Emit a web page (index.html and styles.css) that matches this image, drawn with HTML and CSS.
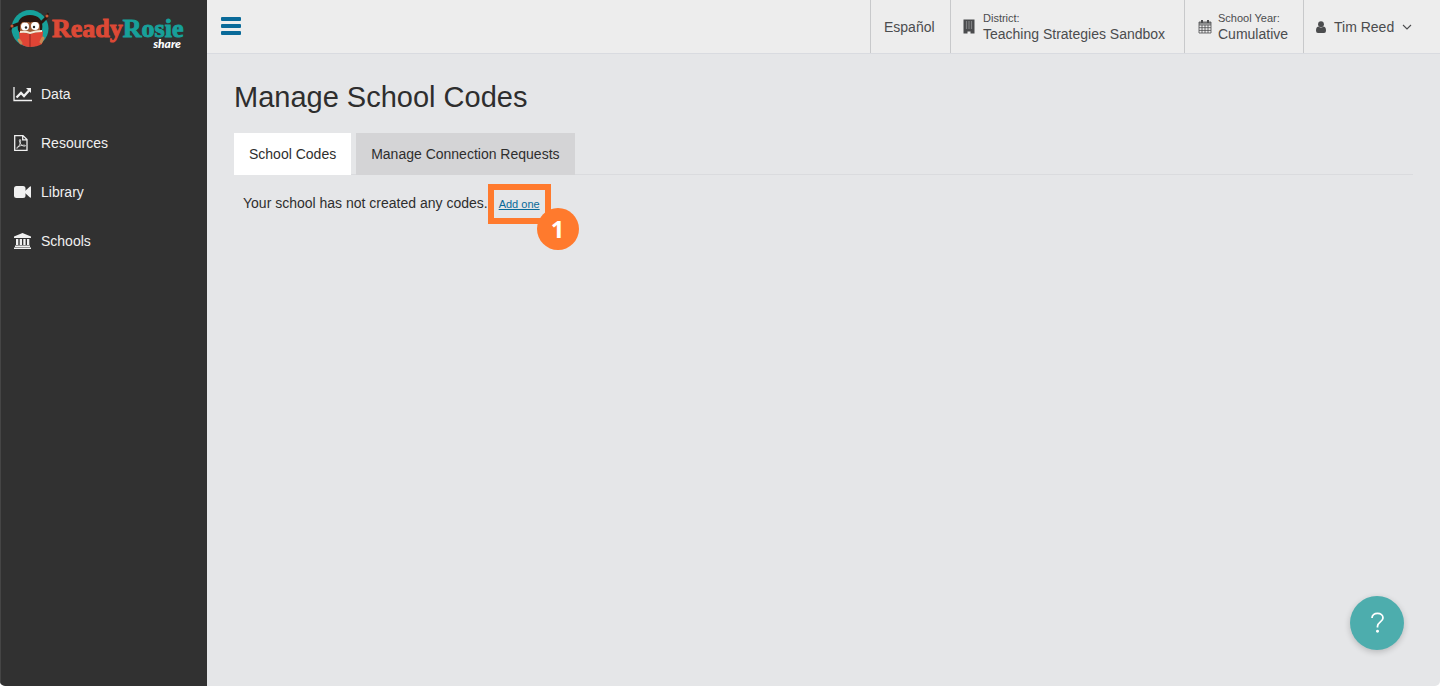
FILE: index.html
```html
<!DOCTYPE html>
<html lang="en">
<head>
    <meta charset="UTF-8">
    <meta name="viewport" content="width=device-width, initial-scale=1.0">
    <title>Manage School Codes</title>
    <link rel="stylesheet" href="styles.css">
</head>
<body>

<div class="app">
    <aside class="sidebar">
        <a class="logo" href="#" aria-label="ReadyRosie share">
            <svg class="logo-mark" viewBox="0 0 42 40" aria-hidden="true">
                <circle cx="22" cy="19.500" r="18.500" fill="#17a09a"/>
                <path d="M10 15 5 17M34 13l5-5" stroke="#2b1711" stroke-width="3" stroke-linecap="round"/>
                <path d="M4 18 2 21M39 8l1-4" stroke="#2b1711" stroke-width="2"/>
                <circle cx="4" cy="17" r="1.500" fill="#c85a35"/>
                <circle cx="39" cy="7" r="1.500" fill="#c85a35"/>
                <path d="M10 21C8 11 14 6 22 6s14 5 12 15l-3 5H13z" fill="#2b1711"/>
                <path d="M12 16l2-3h16l2 3v9H12z" fill="#9c5b36"/>
                <path d="M13 14l3-3 1 3 3-3 2 3 3-3 2 3 3-3 2 3v-4H13z" fill="#2b1711"/>
                <circle cx="17" cy="17.500" r="4" fill="#fff"/>
                <circle cx="27" cy="17" r="4" fill="#fff"/>
                <circle cx="18" cy="18.500" r="1.200" fill="#222"/>
                <circle cx="26" cy="18" r="1.200" fill="#222"/>
                <path d="M11 23l11 2 13-3-1 13q-5 3-12 3-6 0-10-4z" fill="#df4435"/>
                <path d="M22 25v13" stroke="#b8342b" stroke-width="2"/>
                <path d="M12 22q6-1 10 1 5-2 12-2v2q-7 0-12 2-5-2-10-1z" fill="#f5e8d8"/>
                <path d="M11 31l2 3M35 29l-2 4" stroke="#c98552" stroke-width="3" stroke-linecap="round"/>
            </svg>
            <span class="logo-text">
                <span class="logo-name"><span class="logo-ready">Ready</span><span class="logo-rosie">Rosie</span></span>
                <span class="logo-share">share</span>
            </span>
        </a>
        <nav class="menu">
            <a href="#">
                <svg viewBox="0 0 20 18" aria-hidden="true">
                    <path d="M1 2v13.500h18" fill="none" stroke="currentColor" stroke-width="1.300"/>
                    <path d="M3.500 12.500 8 8l3 3 5-5.500" fill="none" stroke="currentColor" stroke-width="2.300"/>
                    <path d="M13 3h5v5z" fill="currentColor"/>
                </svg>
                Data
            </a>
            <a href="#">
                <svg viewBox="0 0 20 18" aria-hidden="true">
                    <path d="M1.700 1.600h8.300l4 4v10.800H1.700zM9.700 1.600v4.300H14" fill="none" stroke="currentColor" stroke-width="1.300"/>
                    <path d="M7 5.500c-1.500 0-.2 4 1.500 5.500 1 1 4 1.800 4 .7 0-1.200-5.500-.3-8 1.300-1.500 1.200-.8 2 .3.700C6 12.300 8.200 8 7.600 6c-.1-.3-.3-.5-.6-.5z" fill="none" stroke="currentColor" stroke-width=".8"/>
                </svg>
                Resources
            </a>
            <a href="#">
                <svg viewBox="0 0 20 18" aria-hidden="true">
                    <rect x="1" y="3" width="11.500" height="12" rx="2.500" fill="currentColor"/>
                    <path d="M12 8l5-4.500q1-.7 1 .5v10q0 1.200-1 .5L12 10z" fill="currentColor"/>
                </svg>
                Library
            </a>
            <a href="#">
                <svg viewBox="0 0 20 18" aria-hidden="true">
                    <path d="M9.500 1 18 4.500V6H1V4.500zM3 7h2.300v6H3zM6.700 7H9v6H6.700zM10.300 7h2.300v6h-2.300zM14 7h2.300v6H14zM2 13.500h15V15H2zM1 15.500h17V17H1z" fill="currentColor"/>
                </svg>
                Schools
            </a>
        </nav>
    </aside>

    <div class="page">
        <header class="topbar">
            <button class="menu-toggle" type="button" aria-label="Toggle menu">
                <span></span><span></span><span></span>
            </button>
            <div class="topbar-items">
                <a class="topbar-item language" href="#">Español</a>
                <a class="topbar-item district" href="#">
                    <svg class="icon-building" viewBox="0 0 12 15" aria-hidden="true">
                        <path d="M.5.5h11v14h-4v-2h-3v2h-4z" fill="currentColor"/>
                        <path d="M3.500 2.500v8M6 2.500v8M8.500 2.500v8" stroke="#ededed" stroke-width="1.200" stroke-dasharray="1 1" opacity=".65"/>
                    </svg>
                    <span class="stacked"><small>District:</small>Teaching Strategies Sandbox</span>
                </a>
                <a class="topbar-item year" href="#">
                    <svg class="icon-calendar" viewBox="0 0 14 15" aria-hidden="true">
                        <path d="M1 3h12v11H1zM1 6h12M1 8.700h12M1 11.400h12M4 6v8M7 6v8M10 6v8" fill="none" stroke="currentColor" stroke-width=".8"/>
                        <path d="M1 3h12v2.500H1z" fill="currentColor" opacity=".6"/>
                        <path d="M4 1v3M10 1v3" stroke="currentColor" stroke-width="2"/>
                    </svg>
                    <span class="stacked"><small>School Year:</small>Cumulative</span>
                </a>
                <button class="topbar-item account" type="button">
                    <svg class="icon-user" viewBox="0 0 10 12" aria-hidden="true">
                        <circle cx="5" cy="3.200" r="2.900" fill="currentColor"/>
                        <path d="M2.300 5.500q2.700 2 5.400 0Q10 6 10 9.700 10 12 8 12H2Q0 12 0 9.700 0 6 2.300 5.500z" fill="currentColor"/>
                    </svg>
                    <span>Tim Reed</span>
                    <svg class="icon-chevron" viewBox="0 0 10 6" aria-hidden="true">
                        <path d="M1 1l4 4 4-4" fill="none" stroke="currentColor" stroke-width="1.100"/>
                    </svg>
                </button>
            </div>
        </header>

        <main class="content">
            <h1>Manage School Codes</h1>
            <div class="tabs" role="tablist">
                <button class="tab active" type="button" role="tab" aria-selected="true">School Codes</button>
                <button class="tab" type="button" role="tab" aria-selected="false">Manage Connection Requests</button>
            </div>
            <p class="empty">
                <span>Your school has not created any codes.</span>
                <span class="highlight"><a href="#">Add one</a><span class="step">1</span></span>
            </p>
        </main>
    </div>

    <button class="help" type="button" aria-label="Help">
        <svg viewBox="0 0 16 24" aria-hidden="true">
            <path d="M2 6.500C2 3.500 4.500 1.500 8 1.500s6 2 6 5c0 4-6 4.500-6 9V17" fill="none" stroke="currentColor" stroke-width="1.900"/>
            <circle cx="8" cy="21" r="1.600" fill="currentColor"/>
        </svg>
    </button>
</div>

</body>
</html>
```
FILE: styles.css
```css
/* Basic Reset */
* {
    margin: 0;
    padding: 0;
    box-sizing: border-box;
}

html {
    background-color: #fff;
}

body {
    font-family: "Liberation Sans", Arial, sans-serif;
    font-size: 14px;
    line-height: 18px;
    color: #2e2e2e;
}

a {
    color: inherit;
    text-decoration: none;
}

button {
    font: inherit;
    color: inherit;
    border: none;
    background: none;
    cursor: pointer;
}

.app {
    display: flex;
    min-height: 100vh;
    overflow: hidden;
    background-color: #e5e6e8;
    border-radius: 0 0 5px 5px;
}

/* Sidebar */
.sidebar {
    flex: 0 0 207px;
    background-color: #313131;
    border-left: 1px solid #454545;
    color: #f0f0f0;
}

.logo {
    display: flex;
    gap: 2px;
    padding: 9px 0 0 7px;
}

.logo-mark {
    width: 42px;
    height: 40px;
}

.logo-text {
    display: flex;
    flex-direction: column;
    width: 129px;
    padding-top: 9px;
    font-weight: bold;
}

.logo-name {
    font-family: "Liberation Serif", "Times New Roman", serif;
    font-size: 26px;
    line-height: 22px;
    -webkit-text-stroke: 1px currentColor;
}

.logo-ready {
    color: #dc4936;
}

.logo-rosie {
    color: #17a09a;
}

.logo-share {
    align-self: flex-end;
    font-family: Lato, sans-serif;
    font-size: 12px;
    font-weight: 900;
    line-height: 8px;
    font-style: italic;
    color: #fff;
}

.menu {
    padding-top: 20px;
}

.menu a {
    display: flex;
    align-items: center;
    gap: 8px;
    height: 49px;
    padding-left: 12px;
}

.menu svg {
    width: 20px;
    height: 18px;
}

/* Top bar */
.page {
    flex: 1;
    min-width: 0;
}

.topbar {
    display: flex;
    justify-content: space-between;
    height: 54px;
    background-color: #ededed;
    border-bottom: 1px solid #d9dbe0;
    color: #4b4c4e;
}

.menu-toggle {
    display: flex;
    flex-direction: column;
    gap: 3px;
    align-self: flex-start;
    padding: 17px 14px;
}

.menu-toggle span {
    width: 20px;
    height: 4px;
    border-radius: 1px;
    background-color: #096a99;
}

.topbar-items {
    display: flex;
}

.topbar-item {
    display: flex;
    align-items: center;
    padding: 0 13px;
    border-left: 1px solid #c8c9cb;
    white-space: nowrap;
}

.topbar-item small {
    display: block;
    font-size: 11px;
    line-height: 14px;
}

.stacked {
    line-height: 18px;
}

.language {
    min-width: 80px;
}

.district {
    gap: 8px;
    min-width: 234px;
    padding-left: 12px;
}

.year {
    gap: 6px;
    min-width: 119px;
}

.account {
    gap: 8px;
    min-width: 137px;
    padding-left: 12px;
}

.icon-building {
    width: 12px;
    height: 15px;
}

.icon-calendar {
    width: 14px;
    height: 15px;
}

.icon-user {
    width: 10px;
    height: 12px;
}

.icon-chevron {
    width: 10px;
    height: 6px;
}

/* Content */
.content {
    padding: 26px 27px;
}

h1 {
    margin-bottom: 19px;
    font-size: 29px;
    font-weight: normal;
    line-height: 34px;
}

.tabs {
    display: flex;
    gap: 5px;
    border-bottom: 1px solid #dadbde;
}

.tab {
    height: 42px;
    margin-bottom: -1px;
    padding: 0 15px;
    background-color: #d4d4d6;
}

.tab.active {
    background-color: #fff;
}

.empty {
    display: flex;
    align-items: baseline;
    gap: 11px;
    padding: 19px 9px;
}

/* Callout around the link */
.highlight {
    position: relative;
    font-size: 11px;
}

.highlight::before {
    content: "";
    position: absolute;
    inset: -11px;
    border: 6px solid #ff7a2d;
    pointer-events: none;
}

.highlight a {
    color: #096a99;
    text-decoration: underline;
}

.step {
    position: absolute;
    top: 13px;
    right: -39px;
    width: 42px;
    border-radius: 50%;
    background-color: #ff7a2d;
    color: #fff;
    font-family: "Noto Sans", sans-serif;
    font-size: 24px;
    font-weight: bold;
    line-height: 42px;
    text-align: center;
}

/* Help button */
.help {
    position: fixed;
    right: 36px;
    bottom: 36px;
    display: flex;
    align-items: center;
    justify-content: center;
    width: 54px;
    height: 54px;
    border-radius: 50%;
    background-color: #4dadad;
    box-shadow: 0 2px 6px rgba(0, 0, 0, 0.2);
    color: #fff;
}

.help svg {
    width: 15px;
    height: 22px;
}
```
